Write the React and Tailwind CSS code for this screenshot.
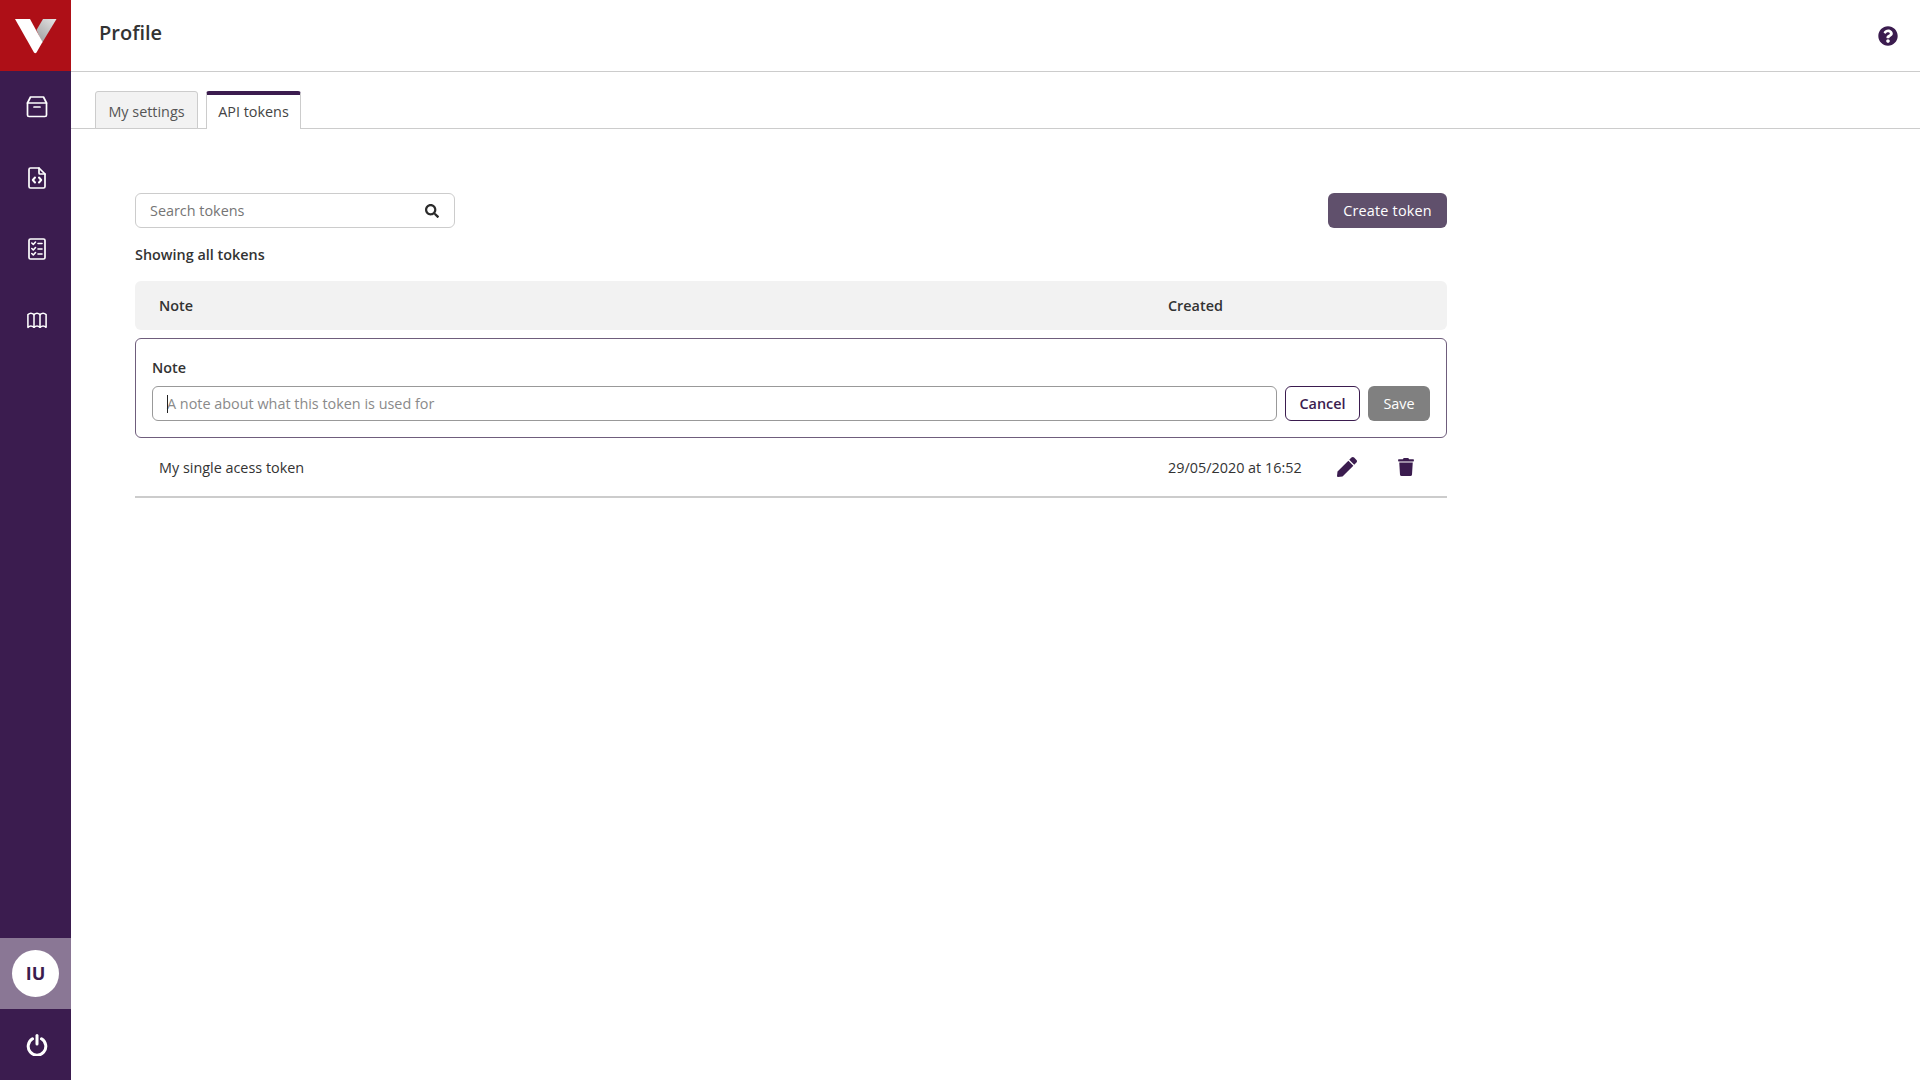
import React from "react";
import { FaSearch, FaPen, FaTrash, FaQuestionCircle } from "react-icons/fa";

function Logo() {
  return (
    <svg width="42" height="35" viewBox="0 0 42 35" className="block">
      <defs>
        <linearGradient id="g" x1="1" y1="0" x2="0.3" y2="1">
          <stop offset="0" stopColor="#e6e6e6" />
          <stop offset="1" stopColor="#a3a3a3" />
        </linearGradient>
      </defs>
      <path d="M28 0 L41.5 0 L27 24 L21.5 11 Z" fill="url(#g)" />
      <path d="M0 0 L15 0 L27.5 23 L21.5 33.5 Q20.3 35 19 33.5 Z" fill="#fff" />
    </svg>
  );
}

function Box() {
  return (
    <svg width="22" height="22" viewBox="0 0 22 22" fill="none" stroke="#fff" strokeWidth="1.7" strokeLinejoin="round" strokeLinecap="round">
      <path d="M1.5 7 L4.5 1 H17.5 L20.5 7 V19 Q20.5 20.5 19 20.5 H3 Q1.5 20.5 1.5 19 Z" />
      <path d="M1.5 7 H20.5" />
      <path d="M8 11 H14" />
    </svg>
  );
}
function FileCode() {
  return (
    <svg width="18" height="22" viewBox="0 0 18 22" fill="none" stroke="#fff" strokeWidth="1.7" strokeLinejoin="round" strokeLinecap="round">
      <path d="M1 2.5 Q1 1 2.5 1 H11 L17 7 V19.5 Q17 21 15.5 21 H2.5 Q1 21 1 19.5 Z" />
      <path d="M11 1 V6 Q11 7 12 7 H17" />
      <path d="M7 10.5 L4.8 13 L7 15.5" strokeWidth="2" />
      <path d="M11 10.5 L13.2 13 L11 15.5" strokeWidth="2" />
    </svg>
  );
}
function Checklist() {
  return (
    <svg width="18" height="22" viewBox="0 0 18 22" fill="none" stroke="#fff" strokeWidth="1.6" strokeLinejoin="round" strokeLinecap="round">
      <rect x="1" y="1" width="16" height="20" rx="1.5" strokeWidth="1.7" />
      <path d="M3.8 5 L5.3 6.5 L7.5 4" />
      <path d="M3.8 10.5 L5.3 12 L7.5 9.5" />
      <path d="M3.8 15.5 L5.3 17 L7.5 14.5" />
      <path d="M10 5.5 H14" />
      <path d="M10 11 H14" />
      <path d="M10 16 H14" />
    </svg>
  );
}
function MapIcon() {
  return (
    <svg width="20" height="19" viewBox="0 0 22 19" fill="none" stroke="#fff" strokeWidth="1.7" strokeLinejoin="round" strokeLinecap="round">
      <path d="M1 3 Q4.2 0 7.7 3 Q11 0 14.3 3 Q17.8 0 21 3 V17 Q17.8 14 14.3 17 Q11 14 7.7 17 Q4.2 14 1 17 Z" />
      <path d="M7.7 3 V17" />
      <path d="M14.3 3 V17" />
    </svg>
  );
}
function Power() {
  return (
    <svg width="22" height="22" viewBox="0 0 22 22" fill="none" stroke="#fff" strokeWidth="3" strokeLinecap="round">
      <path d="M6.5 4.8 A8.8 8.8 0 1 0 15.5 4.8" />
      <path d="M11 1.5 V10" />
    </svg>
  );
}

function NavItem({ children }) {
  return <div className="h-[71px] flex items-center justify-center pl-[2px] pt-[1px]">{children}</div>;
}

export default function App() {
  return (
    <div className="flex h-[1080px] w-[1920px] overflow-hidden bg-white text-[14.4px] text-[#333333] font-['Open_Sans',sans-serif]">
      <aside className="w-[71px] shrink-0 flex flex-col bg-[#3b1c4f]">
        <div className="h-[71px] bg-[#ae0f17] flex items-center justify-center pt-[1px]">
          <Logo />
        </div>
        <NavItem><Box /></NavItem>
        <NavItem><FileCode /></NavItem>
        <NavItem><Checklist /></NavItem>
        <NavItem><MapIcon /></NavItem>
        <div className="flex-1" />
        <div className="h-[71px] bg-[#8a7795] flex items-center justify-center">
          <div className="w-[47px] h-[47px] rounded-full bg-white flex items-center justify-center text-[18px] font-bold text-[#3b1c4f]">IU</div>
        </div>
        <NavItem><Power /></NavItem>
      </aside>

      <main className="flex-1 flex flex-col min-w-0">
        <header className="h-[72px] shrink-0 border-b border-[#cccccc] flex items-start justify-between pl-[28px] pr-[22px]">
          <h1 className="text-[20px] leading-[27px] mt-[19px] font-semibold">Profile</h1>
          <FaQuestionCircle className="mt-[26px] text-[#3b1c4f]" size={20} />
        </header>

        <div className="h-[57px] shrink-0 border-b border-[#cccccc] flex items-end gap-[8px] pl-[24px]">
          <div className="w-[103px] h-[38px] -mb-px pt-[3px] flex items-center justify-center bg-[#f2f2f2] border border-[#cccccc] rounded-t-[3px] text-[#555555]">My settings</div>
          <div className="w-[95px] h-[38px] -mb-px pb-[1px] flex items-center justify-center bg-white border-x border-[#cccccc] border-t-[4px] border-t-[#3b1c4f] rounded-t-[3px] text-[#444444]">API tokens</div>
        </div>

        <div className="w-[1312px] ml-[64px] pt-[64px]">
          <div className="flex items-center justify-between">
            <div className="w-[320px] h-[35px] border border-[#cccccc] rounded-[6px] flex items-center justify-between pl-[14px] pr-[15px]">
              <span className="text-[#757575]">Search tokens</span>
              <FaSearch size={14} className="text-[#2b2b2b]" />
            </div>
            <button className="w-[119px] h-[35px] rounded-[6px] bg-[#60506c] text-white font-medium tracking-[0.2px]">Create token</button>
          </div>

          <div className="mt-[17px] h-[19px] leading-[19px] font-semibold">Showing all tokens</div>

          <div className="mt-[17px] h-[49px] rounded-[6px] bg-[#f2f2f2] flex items-center font-semibold">
            <div className="w-[1033px] pl-[24px]">Note</div>
            <div>Created</div>
          </div>

          <div className="mt-[8px] h-[100px] border border-[#6f5d7c] rounded-[6px] px-[16px] pt-[19px]">
            <div className="h-[19px] leading-[19px] font-semibold">Note</div>
            <div className="mt-[9px] flex items-center gap-[8px]">
              <div className="relative flex-1 h-[35px] border border-[#999999] rounded-[6px] flex items-center pl-[14px]">
                <span className="absolute left-[14px] top-[8px] w-px h-[18px] bg-[#222222]" />
                <span className="text-[#8a8a8a]">A note about what this token is used for</span>
              </div>
              <button className="h-[35px] w-[75px] rounded-[6px] border border-[#3b1c4f] text-[#3b1c4f] font-semibold bg-white">Cancel</button>
              <button className="h-[35px] w-[62px] rounded-[6px] bg-[#808080] text-white font-medium">Save</button>
            </div>
          </div>

          <div className="h-[60px] border-b-2 border-[#cccccc] flex items-center">
            <div className="w-[1033px] pl-[24px] pt-[2px]">My single acess token</div>
            <div className="w-[169px] pt-[2px]">29/05/2020 at 16:52</div>
            <FaPen size={20} className="text-[#3b1c4f]" />
            <FaTrash size={18} className="text-[#3b1c4f] ml-[40px]" />
          </div>
        </div>
      </main>
    </div>
  );
}
